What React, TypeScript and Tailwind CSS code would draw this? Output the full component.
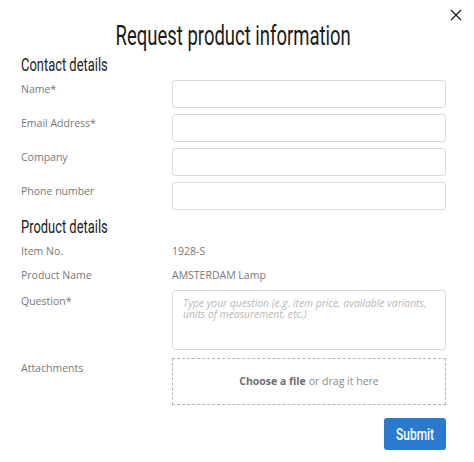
import React from 'react';

const heading = { fontFamily: 'Roboto, "Liberation Sans", sans-serif' };
const body = { fontFamily: '"Open Sans", "Liberation Sans", sans-serif' };

function Field({ label }: { label: string }) {
  return (
    <div className="flex mb-[6px]">
      <div className="w-[151px] text-[10.5px] leading-[18px] text-[#777]">{label}</div>
      <input className="flex-1 h-[28px] border border-[#dcdcdc] rounded-[3px] outline-none px-2" />
    </div>
  );
}

function Info({ label, value }: { label: string; value: string }) {
  return (
    <div className="flex h-[24px] items-center text-[10.5px] text-[#777]">
      <div className="w-[151px]">{label}</div>
      <div>{value}</div>
    </div>
  );
}

function Heading({ children, className = '' }: { children: React.ReactNode; className?: string }) {
  return (
    <h2 className={`h-[26px] text-[19px] leading-[26px] font-normal text-[#1a1a1a] whitespace-nowrap ${className}`}>
      <span className="inline-block origin-left scale-x-[0.68]" style={heading}>
        {children}
      </span>
    </h2>
  );
}

export default function App() {
  return (
    <div className="relative w-[474px] h-[462px] bg-white pl-[21px] pr-[28px]" style={body}>
      <button className="absolute right-[11px] top-[8px] text-[#222]" aria-label="Close">
        <svg width="14" height="14" viewBox="0 0 14 14" fill="none" stroke="currentColor" strokeWidth="1.4">
          <path d="M2 2 L12 12 M12 2 L2 12" />
        </svg>
      </button>

      <h1 className="pt-[16px] h-[51px] text-center text-[28px] leading-[36px] font-normal text-[#1a1a1a] whitespace-nowrap">
        <span className="inline-block origin-center scale-x-[0.66]" style={heading}>
          Request product information
        </span>
      </h1>

      <Heading>Contact details</Heading>
      <div className="mt-[3px]">
        <Field label="Name*" />
        <Field label="Email Address*" />
        <Field label="Company" />
        <Field label="Phone number" />
      </div>

      <Heading className="-mt-[3px]">Product details</Heading>
      <div className="mt-[1px]">
        <Info label="Item No." value="1928-S" />
        <Info label="Product Name" value="AMSTERDAM Lamp" />
      </div>

      <div className="flex mt-[2px]">
        <div className="w-[151px] pt-[2px] text-[10.5px] leading-[18px] text-[#777]">Question*</div>
        <textarea
          className="flex-1 h-[60px] resize-none border border-[#dcdcdc] rounded-[3px] outline-none pl-[10px] pr-[8px] pt-[7px] text-[10.3px] leading-[11px] italic placeholder:text-[#b8b8b8]"
          placeholder="Type your question (e.g. item price, available variants, units of measurement, etc.)"
        />
      </div>

      <div className="flex mt-[8px]">
        <div className="w-[151px] pt-[1px] text-[10.5px] leading-[18px] text-[#777]">Attachments</div>
        <div className="flex-1 h-[47px] border border-dashed border-[#b5b5b5] flex items-center justify-center text-[10.5px] text-[#8a8a8a]">
          <span className="font-bold text-[#6e6e6e] mr-[3px]">Choose a file</span>or drag it here
        </div>
      </div>

      <div className="flex justify-end mt-[13px]">
        <button className="w-[62px] h-[32px] rounded-[3px] bg-[#2a7bcf] text-white text-[17px] font-medium">
          <span className="inline-block scale-x-[0.7]" style={heading}>Submit</span>
        </button>
      </div>
    </div>
  );
}
